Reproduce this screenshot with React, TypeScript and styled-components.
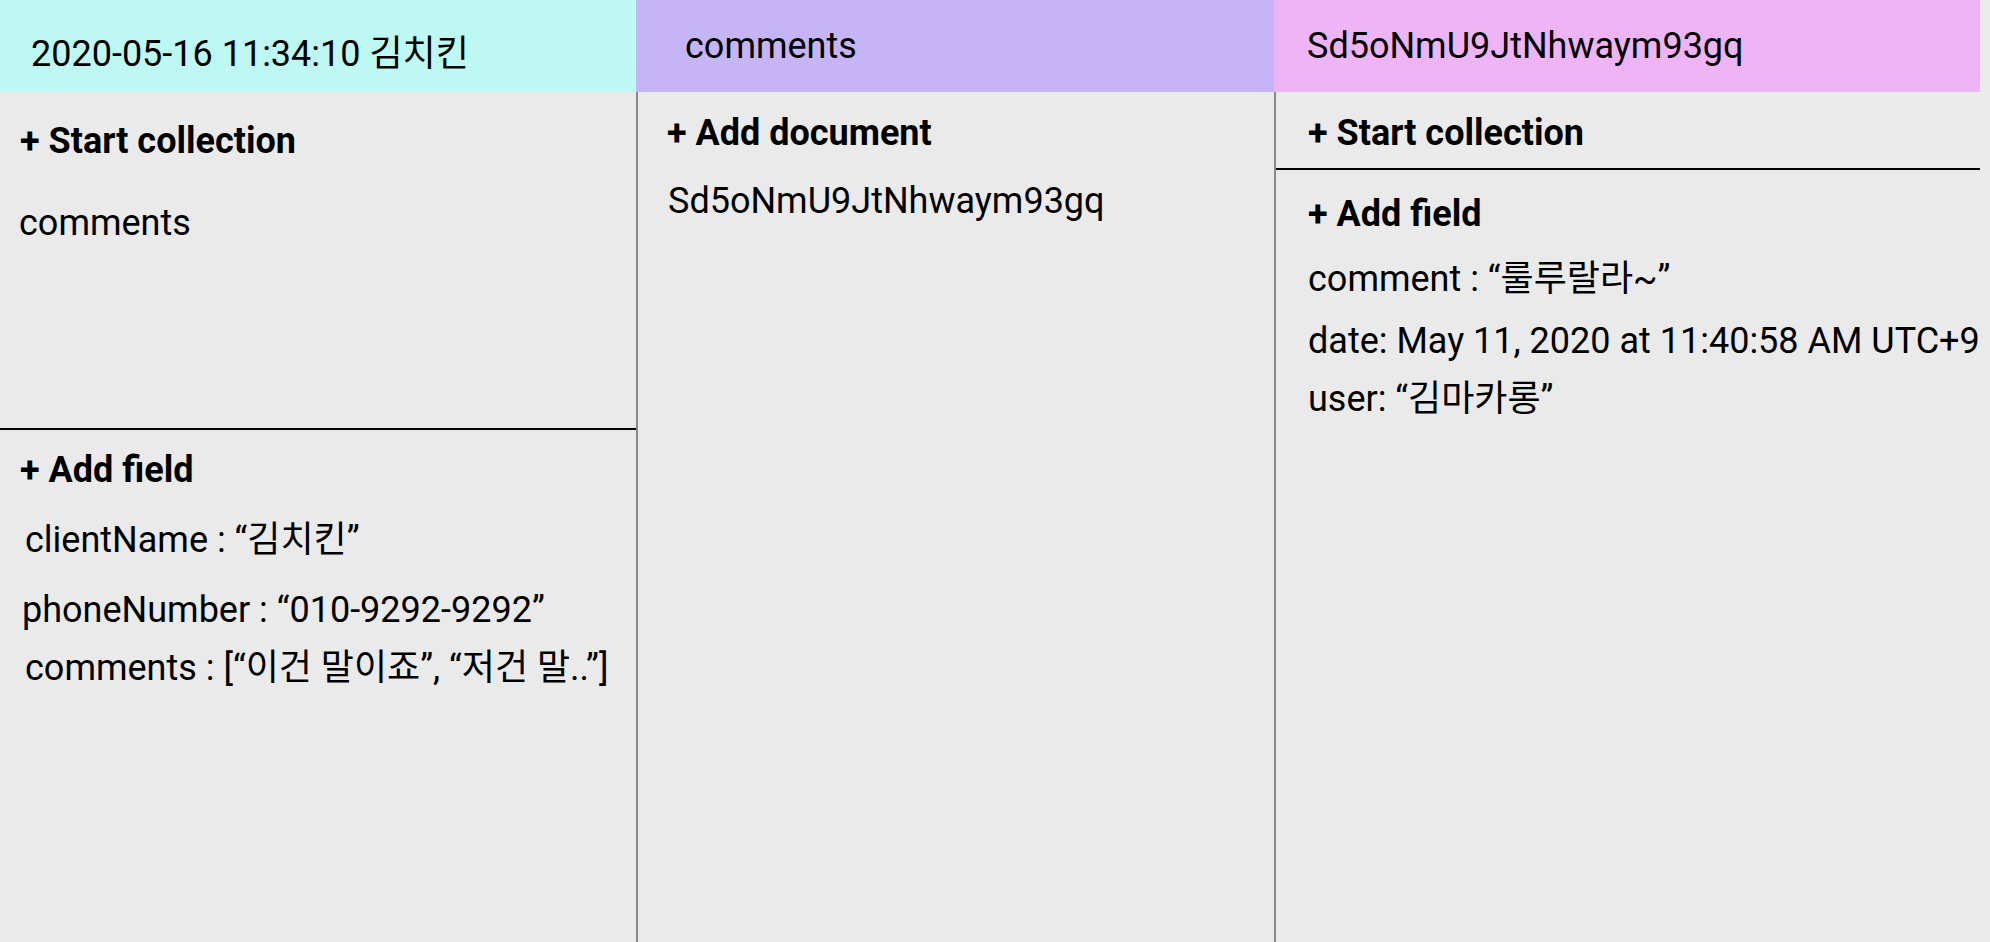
import React from "react";
import styled, { createGlobalStyle } from "styled-components";

const GlobalStyle = createGlobalStyle`
  html, body {
    margin: 0;
    padding: 0;
    background: #eaeaea;
  }
  body {
    font-family: Roboto, "Noto Sans CJK KR", sans-serif;
    color: #000;
  }
`;

const Page = styled.div`
  display: grid;
  grid-template-columns: 636px 638px 706px;
  height: 942px;
  background: #eaeaea;
  overflow: hidden;
`;

const Column = styled.div`
  display: flex;
  flex-direction: column;
  min-width: 0;
`;

const Header = styled.div<{ $bg: string; $padTop: number; $padLeft: number }>`
  height: 92px;
  box-sizing: border-box;
  background: ${(p) => p.$bg};
  padding-top: ${(p) => p.$padTop}px;
  padding-left: ${(p) => p.$padLeft}px;
  font-size: 36px;
  line-height: 42px;
  white-space: nowrap;
`;

const Body = styled.div<{ $divider?: boolean }>`
  flex: 1;
  display: flex;
  flex-direction: column;
  border-left: ${(p) => (p.$divider ? "2px solid #888" : "none")};
`;

const Section = styled.div<{ $height?: number; $rule?: boolean }>`
  display: flex;
  flex-direction: column;
  box-sizing: content-box;
  height: ${(p) => (p.$height ? `${p.$height}px` : "auto")};
  border-bottom: ${(p) => (p.$rule ? "2px solid #000" : "none")};
`;

const Action = styled.div<{ $top: number; $left: number }>`
  margin-top: ${(p) => p.$top}px;
  padding-left: ${(p) => p.$left}px;
  font-size: 36px;
  line-height: 42px;
  font-weight: 700;
  white-space: nowrap;
`;

const Line = styled.div<{ $top: number; $left: number }>`
  margin-top: ${(p) => p.$top}px;
  padding-left: ${(p) => p.$left}px;
  font-size: 36px;
  line-height: 42px;
  font-weight: 400;
  white-space: nowrap;
`;

export default function App() {
  return (
    <>
      <GlobalStyle />
      <Page>
        <Column>
          <Header $bg="#bef8f2" $padTop={33} $padLeft={31}>
            2020-05-16 11:34:10 김치킨
          </Header>
          <Body>
            <Section $height={336} $rule>
              <Action $top={28} $left={20}>+ Start collection</Action>
              <Line $top={40} $left={19}>comments</Line>
            </Section>
            <Section>
              <Action $top={19} $left={20}>+ Add field</Action>
              <Line $top={28} $left={25}>clientName : “김치킨”</Line>
              <Line $top={28} $left={22}>phoneNumber : “010-9292-9292”</Line>
              <Line $top={16} $left={25}>comments : [“이건 말이죠”, “저건 말..”]</Line>
            </Section>
          </Body>
        </Column>

        <Column>
          <Header $bg="#c5b4f6" $padTop={25} $padLeft={49}>
            comments
          </Header>
          <Body $divider>
            <Section>
              <Action $top={20} $left={29}>+ Add document</Action>
              <Line $top={26} $left={30}>Sd5oNmU9JtNhwaym93gq</Line>
            </Section>
          </Body>
        </Column>

        <Column>
          <Header $bg="#eeb4f6" $padTop={25} $padLeft={33}>
            Sd5oNmU9JtNhwaym93gq
          </Header>
          <Body $divider>
            <Section $height={76} $rule>
              <Action $top={20} $left={32}>+ Start collection</Action>
            </Section>
            <Section>
              <Action $top={23} $left={32}>+ Add field</Action>
              <Line $top={23} $left={32}>comment : “룰루랄라~”</Line>
              <Line $top={20} $left={32}>date: May 11, 2020 at 11:40:58 AM UTC+9</Line>
              <Line $top={16} $left={32}>user: “김마카롱”</Line>
            </Section>
          </Body>
        </Column>
      </Page>
    </>
  );
}
